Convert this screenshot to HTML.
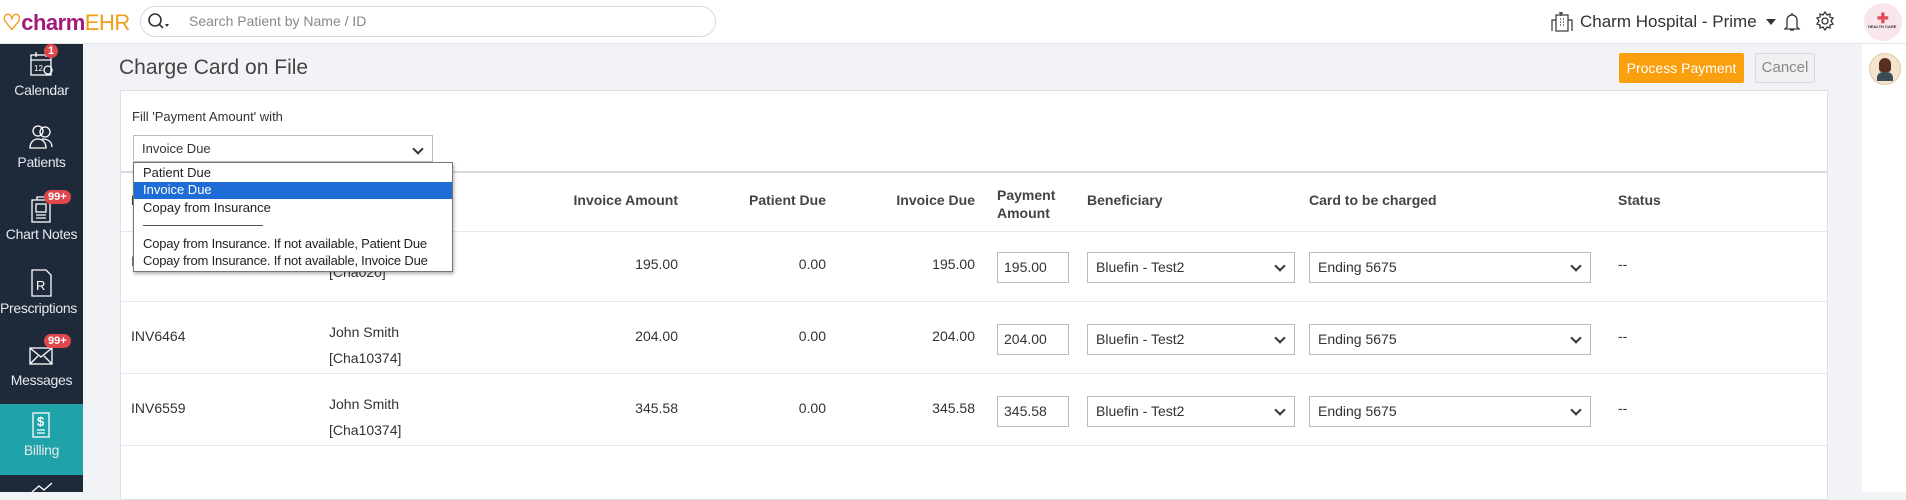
<!DOCTYPE html>
<html><head><meta charset="utf-8"><style>
*{box-sizing:border-box;margin:0;padding:0}
body{width:1906px;height:492px;overflow:hidden;font-family:"Liberation Sans",sans-serif;background:#f1f3f6;position:relative;color:#333}
.abs{position:absolute}
.top{left:0;top:0;width:1906px;height:44px;background:#fff;border-bottom:1px solid #e3e5e8}
.side{left:0;top:44px;width:83px;height:448px;background:#1e2939}
.nav{position:absolute;left:0;width:83px;height:72px;color:#e6e9ee;font-size:14px;text-align:center}
.nav .lb{position:absolute;top:38px;width:100%;left:0;white-space:nowrap;letter-spacing:-0.3px}
.nav svg{position:absolute;left:28px;top:6px}
.badge{position:absolute;background:#e0474c;color:#fff;font-size:11px;border-radius:9px;padding:1px 4px;font-weight:bold}
.panel{left:120px;top:90px;width:1708px;height:410px;background:#fff;border:1px solid #dde0e4}
.rs{left:1862px;top:44px;width:44px;height:448px;background:#fff}
.th{position:absolute;font-size:14px;font-weight:bold;color:#444;white-space:nowrap}
.td{position:absolute;font-size:14px;color:#333;white-space:nowrap}
.r{text-align:right}
.hl{position:absolute;left:0;width:1706px;height:1px;background:#e6e8eb}
.inp{position:absolute;border:1px solid #bbb;background:#fff;font-size:14px;padding:6px 6px;height:31px}
.sel{position:absolute;border:1px solid #bbb;background:#fff;font-size:14px;padding:6px 8px;height:31px}
.sel:after{content:"";position:absolute;right:10px;top:9px;width:6px;height:6px;border-right:2px solid #333;border-bottom:2px solid #333;transform:rotate(45deg)}
.dd{left:133px;top:162px;width:320px;height:110px;background:#fff;border:1px solid #777;box-shadow:1px 2px 3px rgba(0,0,0,.3);font-size:13px;color:#222}
.dd div{position:absolute;left:9px;white-space:nowrap}
</style></head><body>
<div class="abs top"></div>
<div class="abs" style="left:2px;top:10px;font-size:22px;font-weight:bold;color:#a21a7b;letter-spacing:-0.5px"><span style="color:#f29d1a">♡</span>charm<span style="color:#f29d1a;font-weight:normal">EHR</span></div>
<div class="abs" style="left:140px;top:6px;width:576px;height:31px;border:1px solid #d8dadd;border-radius:16px;background:#fff"></div>
<svg class="abs" style="left:147px;top:12px" width="24" height="20"><circle cx="8" cy="8" r="6" fill="none" stroke="#333" stroke-width="1.6"/><line x1="12" y1="12" x2="16" y2="16" stroke="#333" stroke-width="1.6"/><path d="M18 12l4 0-2 3z" fill="#333"/></svg>
<div class="abs" style="left:189px;top:13px;font-size:14px;color:#888">Search Patient by Name / ID</div>
<svg class="abs" style="left:1550px;top:10px" width="24" height="24" fill="none" stroke="#333" stroke-width="1.2"><rect x="6" y="5" width="12" height="16"/><path d="M2 21V10h4M22 21V10h-4M10 9h1M13 9h1M10 12h1M13 12h1M10 15h1M13 15h1M11 2v4M9 3h4"/></svg>
<div class="abs" style="left:1580px;top:12px;font-size:17px;color:#333">Charm Hospital - Prime</div>
<div class="abs" style="left:1766px;top:19px;border-left:5px solid transparent;border-right:5px solid transparent;border-top:6px solid #333"></div>
<svg class="abs" style="left:1783px;top:11px" width="18" height="22" fill="none" stroke="#333" stroke-width="1.3"><path d="M9 2v2M4 16V9a5 5 0 0 1 10 0v7l2 2H2z M7 19h4"/></svg>
<svg class="abs" style="left:1815px;top:11px" width="20" height="20" fill="none" stroke="#333" stroke-width="1.3"><circle cx="10" cy="10" r="3"/><path d="M10 1l2 3 3-1 0 3 3 1-2 3 2 3-3 1 0 3-3-1-2 3-2-3-3 1 0-3-3-1 2-3-2-3 3-1 0-3 3 1z"/></svg>
<div class="abs" style="left:1864px;top:3px;width:38px;height:38px;border-radius:50%;background:#f9e6ea"></div>
<div class="abs" style="left:1877px;top:10px;color:#e04a5a;font-size:14px;font-weight:bold">✚</div>
<div class="abs" style="left:1868px;top:24px;font-size:4px;font-weight:bold">HEALTH CARE</div>

<div class="abs side"></div>
<div class="nav" style="top:44px"><svg width="28" height="30" fill="none" stroke="#fff" stroke-width="1.3"><rect x="3" y="5" width="20" height="20"/><path d="M3 10h20M8 2v5M18 2v5"/><text x="6" y="21" font-size="8" fill="#fff" stroke="none">12</text><circle cx="20" cy="20" r="4"/></svg><span class="badge" style="left:44px;top:0px">1</span><div class="lb">Calendar</div></div>
<div class="nav" style="top:116px"><svg width="28" height="30" fill="none" stroke="#fff" stroke-width="1.3"><circle cx="10" cy="9" r="5"/><circle cx="17" cy="10" r="5"/><path d="M2 26c0-6 4-9 8-9s8 3 8 9zM14 17c5 0 10 2 10 8"/></svg><div class="lb">Patients</div></div>
<div class="nav" style="top:188px"><svg width="28" height="30" fill="none" stroke="#fff" stroke-width="1.3"><rect x="4" y="6" width="18" height="22"/><path d="M9 6V3h8v3M8 21h10M8 24h10"/><rect x="8" y="10" width="10" height="8"/></svg><span class="badge" style="left:44px;top:2px">99+</span><div class="lb">Chart Notes</div></div>
<div class="nav" style="top:262px"><svg width="28" height="30" fill="none" stroke="#fff" stroke-width="1.3"><path d="M4 2h14l5 5v21H4z"/><text x="8" y="22" font-size="13" fill="#fff" stroke="none">R</text></svg><div class="lb" style="left:-3px">Prescriptions</div></div>
<div class="nav" style="top:334px"><svg width="28" height="30" fill="none" stroke="#fff" stroke-width="1.3"><rect x="2" y="8" width="22" height="16"/><path d="M2 8l11 9 11-9M2 24l8-8M24 24l-8-8"/></svg><span class="badge" style="left:44px;top:0px">99+</span><div class="lb">Messages</div></div>
<div class="nav" style="top:404px;background:#1fa3a8;height:71px"><svg width="28" height="30" fill="none" stroke="#fff" stroke-width="1.3"><rect x="5" y="3" width="16" height="24"/><path d="M9 20h8M9 23h8"/><text x="9" y="16" font-size="13" fill="#fff" stroke="none" font-weight="bold">$</text></svg><div class="lb">Billing</div></div>
<svg class="abs" style="left:30px;top:482px" width="24" height="10" fill="none" stroke="#fff" stroke-width="1.3"><path d="M2 10l7-6 5 4 8-7"/></svg>

<div class="abs rs"></div>
<div class="abs" style="left:1869px;top:53px;width:32px;height:32px;border-radius:50%;background:#f4e4cf;border:1px solid #e0c9aa"></div>
<div class="abs" style="left:1879px;top:58px;width:12px;height:14px;border-radius:6px 6px 3px 3px;background:#5a2e20"></div>
<div class="abs" style="left:1877px;top:72px;width:16px;height:9px;background:#3c4b56;border-radius:6px 6px 0 0"></div>

<div class="abs" style="left:119px;top:56px;font-size:21px;color:#444">Charge Card on File</div>
<div class="abs" style="left:1619px;top:53px;width:125px;height:30px;background:#fa9f0e;border-radius:2px;color:#fff;font-size:14px;text-align:center;line-height:30px;white-space:nowrap">Process Payment</div>
<div class="abs" style="left:1755px;top:53px;width:60px;height:30px;background:#eef0f2;border:1px solid #d6d9dd;border-radius:2px;color:#888;font-size:15px;text-align:center;line-height:28px">Cancel</div>

<div class="abs panel">
<div class="td" style="left:11px;top:18px;color:#333;font-size:13px">Fill 'Payment Amount' with</div>
<div class="sel" style="left:12px;top:44px;width:300px;height:27px;padding:5px 8px;font-size:13px">Invoice Due</div>
<div class="hl" style="top:80px;height:2px;background:#d8dbde"></div>
<div class="th" style="left:10px;top:101px">Invoice</div>
<div class="th r" style="left:437px;width:120px;top:101px">Invoice Amount</div>
<div class="th r" style="left:585px;width:120px;top:101px">Patient Due</div>
<div class="th r" style="left:734px;width:120px;top:101px">Invoice Due</div>
<div class="th" style="left:876px;top:95px;line-height:18px">Payment<br>Amount</div>
<div class="th" style="left:966px;top:101px">Beneficiary</div>
<div class="th" style="left:1188px;top:101px">Card to be charged</div>
<div class="th" style="left:1497px;top:101px">Status</div>
<div class="hl" style="top:140px"></div>

<div class="td" style="left:10px;top:162px">INV</div>
<div class="td" style="left:208px;top:173px">[Cha020]</div>
<div class="td r" style="left:437px;width:120px;top:165px">195.00</div>
<div class="td r" style="left:585px;width:120px;top:165px">0.00</div>
<div class="td r" style="left:734px;width:120px;top:165px">195.00</div>
<div class="inp" style="left:876px;top:161px;width:72px">195.00</div>
<div class="sel" style="left:966px;top:161px;width:208px">Bluefin - Test2</div>
<div class="sel" style="left:1188px;top:161px;width:282px">Ending 5675</div>
<div class="td" style="left:1497px;top:165px">--</div>
<div class="hl" style="top:210px"></div>

<div class="td" style="left:10px;top:237px">INV6464</div>
<div class="td" style="left:208px;top:228px;line-height:26px">John Smith<br>[Cha10374]</div>
<div class="td r" style="left:437px;width:120px;top:237px">204.00</div>
<div class="td r" style="left:585px;width:120px;top:237px">0.00</div>
<div class="td r" style="left:734px;width:120px;top:237px">204.00</div>
<div class="inp" style="left:876px;top:233px;width:72px">204.00</div>
<div class="sel" style="left:966px;top:233px;width:208px">Bluefin - Test2</div>
<div class="sel" style="left:1188px;top:233px;width:282px">Ending 5675</div>
<div class="td" style="left:1497px;top:237px">--</div>
<div class="hl" style="top:282px"></div>

<div class="td" style="left:10px;top:309px">INV6559</div>
<div class="td" style="left:208px;top:300px;line-height:26px">John Smith<br>[Cha10374]</div>
<div class="td r" style="left:437px;width:120px;top:309px">345.58</div>
<div class="td r" style="left:585px;width:120px;top:309px">0.00</div>
<div class="td r" style="left:734px;width:120px;top:309px">345.58</div>
<div class="inp" style="left:876px;top:305px;width:72px">345.58</div>
<div class="sel" style="left:966px;top:305px;width:208px">Bluefin - Test2</div>
<div class="sel" style="left:1188px;top:305px;width:282px">Ending 5675</div>
<div class="td" style="left:1497px;top:309px">--</div>
<div class="hl" style="top:354px"></div>
</div>

<div class="abs dd">
<div style="top:2px">Patient Due</div>
<div style="left:0;top:19px;width:318px;height:17px;background:#1e6cd5;color:#fff;padding-left:9px">Invoice Due</div>
<div style="top:37px">Copay from Insurance</div>
<div style="top:62px;width:120px;height:1px;background:#555"></div>
<div style="top:73px;letter-spacing:-0.2px">Copay from Insurance. If not available, Patient Due</div>
<div style="top:90px;letter-spacing:-0.2px">Copay from Insurance. If not available, Invoice Due</div>
</div>
</body></html>
